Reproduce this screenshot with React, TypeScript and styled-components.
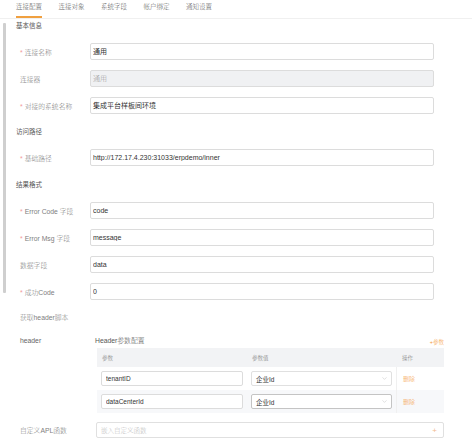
import React from "react";
import styled, { createGlobalStyle } from "styled-components";
import { ChevronDown } from "lucide-react";

const GlobalStyle = createGlobalStyle`
  html, body { margin: 0; padding: 0; background: #fff; }
  body {
    font-family: "Liberation Sans", "Noto Sans CJK SC", sans-serif;
    font-weight: 300;
    color: #333;
  }
  * { box-sizing: border-box; }
`;

const Page = styled.div`
  width: 474px;
  height: 443px;
  overflow: hidden;
  background: #fff;
`;

const TabBar = styled.div`
  display: flex;
  gap: 16.5px;
  height: 19px;
  padding-left: 16px;
  border-bottom: 1px solid #f0f0f0;
  margin-right: 2px;
`;

const Tab = styled.div<{ $active?: boolean }>`
  width: 26px;
  flex-shrink: 0;
  display: flex;
  align-items: center;
  justify-content: center;
  white-space: nowrap;
  height: 18px;
  padding-bottom: 4px;
  font-size: 6.5px;
  color: #5c5c5c;
  border-bottom: 2px solid ${(p) => (p.$active ? "#f0a040" : "transparent")};
`;

const Body = styled.div`
  display: flex;
`;

const Gutter = styled.div`
  width: 16px;
  flex-shrink: 0;
  padding: 4px 0 0 3px;
`;

const ScrollThumb = styled.div`
  width: 3px;
  height: 270px;
  background: #cfcfcf;
  border-radius: 1px;
`;

const Main = styled.div`
  flex: 1;
  display: flex;
  flex-direction: column;
`;

const SectionTitle = styled.div<{ $mt: number }>`
  margin-top: ${(p) => p.$mt}px;
  margin-bottom: 12px;
  height: 10px;
  line-height: 10px;
  font-size: 6.5px;
  font-weight: 400;
  color: #555;
`;

const FormRow = styled.div<{ $h?: number }>`
  display: flex;
  align-items: center;
  height: ${(p) => p.$h ?? 17}px;
  margin-bottom: 10px;
  padding-left: 4px;
`;

const Label = styled.div<{ $w?: number }>`
  width: ${(p) => p.$w ?? 70}px;
  flex-shrink: 0;
  font-size: 6.8px;
  color: #808080;
  white-space: nowrap;
`;

const Star = styled.span`
  color: #f29a9a;
  margin-right: 2px;
`;

const TextInput = styled.input<{ $w?: number }>`
  width: ${(p) => p.$w ?? 344}px;
  height: 17px;
  padding: 0 2px 1px;
  border: 1px solid #dcdcdc;
  border-radius: 2px;
  font-family: inherit;
  font-weight: 400;
  font-size: 7px;
  color: #333;
  background: #fff;
  outline: none;
  &:disabled {
    background: #f0f1f3;
    color: #999;
    font-weight: 300;
  }
`;

const HeaderRow = styled.div`
  display: flex;
  padding-left: 4px;
`;

const HeaderLabel = styled.div`
  width: 75px;
  flex-shrink: 0;
  height: 12px;
  display: flex;
  align-items: center;
  font-size: 6.8px;
  color: #666;
`;

const HeaderContent = styled.div`
  width: 349px;
  display: flex;
  flex-direction: column;
`;

const TitleLine = styled.div`
  display: flex;
  justify-content: space-between;
  align-items: center;
  height: 12px;
  font-size: 6.8px;
  color: #555;
`;

const AddParam = styled.span`
  font-size: 5.5px;
  color: #f59a3a;
  margin-top: 3px;
`;

const Table = styled.div`
  margin: 2px 0 0 2px;
  width: 347px;
  display: grid;
  grid-template-columns: 150px 150px 47px;
`;

const HeadCell = styled.div`
  height: 19px;
  display: flex;
  align-items: center;
  padding-left: 5px;
  background: #f2f3f5;
  font-size: 5.5px;
  color: #777;
`;

const Cell = styled.div<{ $shade?: boolean; $divider?: boolean }>`
  height: 23px;
  display: flex;
  align-items: center;
  padding: 0 4px;
  background: ${(p) => (p.$shade ? "#f7f8fa" : "#fff")};
  border-right: ${(p) => (p.$divider ? "1px solid #f0f0f0" : "none")};
`;

const CellInput = styled.input`
  width: 142px;
  height: 15px;
  padding: 0 4px;
  border: 1px solid #dcdcdc;
  border-radius: 2px;
  font-family: inherit;
  font-weight: 400;
  font-size: 6.5px;
  color: #333;
  background: #fff;
  outline: none;
`;

const Select = styled.div<{ $focus?: boolean }>`
  width: 141px;
  height: 15px;
  padding: 0 3px 0 4px;
  display: flex;
  align-items: center;
  justify-content: space-between;
  border: 1px solid ${(p) => (p.$focus ? "#c4c4c4" : "#e0e0e0")};
  border-radius: 2px;
  background: #fff;
  font-size: 6.5px;
  font-weight: 400;
  color: #333;
`;

const DeleteLink = styled.span`
  font-size: 6px;
  color: #f59a3a;
  padding-left: 2px;
`;

const AplRow = styled.div`
  display: flex;
  align-items: center;
  margin-top: 9px;
  padding-left: 4px;
`;

const AplInput = styled.div`
  width: 348px;
  height: 16px;
  padding: 0 6px 0 4px;
  display: flex;
  align-items: center;
  justify-content: space-between;
  border: 1px solid #e0e0e0;
  border-radius: 2px;
  font-size: 6.5px;
  color: #c0c0c0;
`;

const Plus = styled.span`
  font-size: 8px;
  color: #f2b98c;
`;

const tabs = ["连接配置", "连接对象", "系统字段", "帐户绑定", "通知设置"];

type Field = { label: string; value: string; required?: boolean; disabled?: boolean };

const Row = ({ label, value, required, disabled }: Field) => (
  <FormRow>
    <Label>
      {required && <Star>*</Star>}
      {label}
    </Label>
    <TextInput readOnly value={value} disabled={disabled} />
  </FormRow>
);

const params = [
  { key: "tenantID", value: "企业Id" },
  { key: "dataCenterId", value: "企业Id" },
];

export default function App() {
  return (
    <Page>
      <GlobalStyle />
      <TabBar>
        {tabs.map((t, i) => (
          <Tab key={t} $active={i === 0}>
            {t}
          </Tab>
        ))}
      </TabBar>
      <Body>
        <Gutter>
          <ScrollThumb />
        </Gutter>
        <Main>
          <SectionTitle $mt={2}>基本信息</SectionTitle>
          <Row label="连接名称" value="通用" required />
          <Row label="连接器" value="通用" disabled />
          <Row label="对接的系统名称" value="集成平台样板间环境" required />

          <SectionTitle $mt={3}>访问路径</SectionTitle>
          <Row label="基础路径" value="http://172.17.4.230:31033/erpdemo/inner" required />

          <SectionTitle $mt={4}>结果格式</SectionTitle>
          <Row label="Error Code 字段" value="code" required />
          <Row label="Error Msg 字段" value="message" required />
          <Row label="数据字段" value="data" />
          <Row label="成功Code" value="0" required />

          <FormRow $h={14}>
            <Label>获取header脚本</Label>
          </FormRow>

          <HeaderRow>
            <HeaderLabel>header</HeaderLabel>
            <HeaderContent>
              <TitleLine>
                <span>Header参数配置</span>
                <AddParam>+参数</AddParam>
              </TitleLine>
              <Table>
                <HeadCell>参数</HeadCell>
                <HeadCell>参数值</HeadCell>
                <HeadCell>操作</HeadCell>
                {params.map((p, i) => (
                  <React.Fragment key={p.key}>
                    <Cell $shade={i === 1}>
                      <CellInput readOnly value={p.key} />
                    </Cell>
                    <Cell $shade={i === 1} $divider>
                      <Select $focus={i === 1}>
                        <span>{p.value}</span>
                        <ChevronDown size={7} color="#bbb" strokeWidth={1.5} />
                      </Select>
                    </Cell>
                    <Cell $shade={i === 1}>
                      <DeleteLink>删除</DeleteLink>
                    </Cell>
                  </React.Fragment>
                ))}
              </Table>
            </HeaderContent>
          </HeaderRow>

          <AplRow>
            <Label $w={76}>自定义APL函数</Label>
            <AplInput>
              <span>嵌入自定义函数</span>
              <Plus>+</Plus>
            </AplInput>
          </AplRow>
        </Main>
      </Body>
    </Page>
  );
}
